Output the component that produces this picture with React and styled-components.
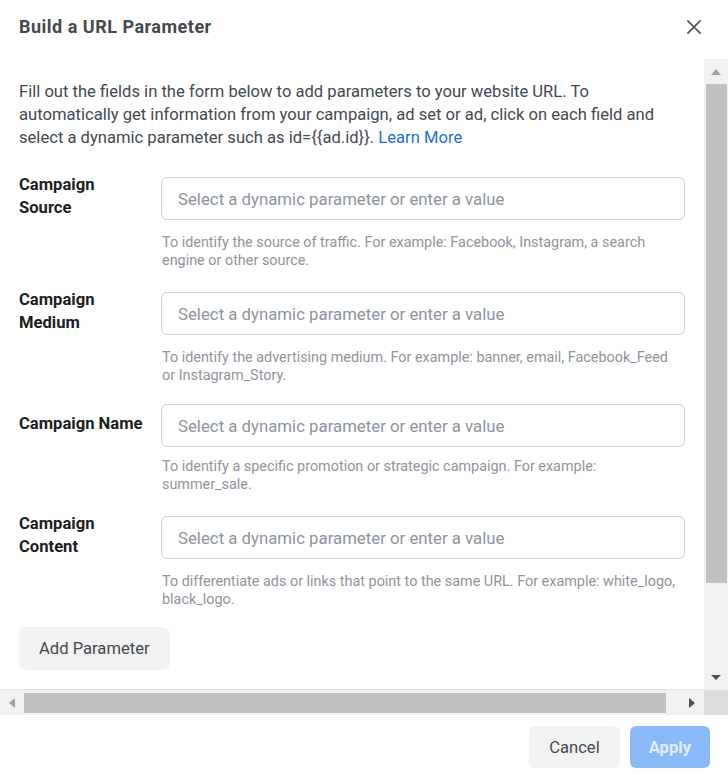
import React from "react";
import styled, { createGlobalStyle, css } from "styled-components";

const Global = createGlobalStyle`
  html, body { margin: 0; padding: 0; background: #ffffff; }
  body { font-family: Roboto, "Liberation Sans", Arial, sans-serif; }
  * { box-sizing: border-box; }
`;

const Dialog = styled.div`
  width: 728px;
  height: 775px;
  display: flex;
  flex-direction: column;
  background: #fff;
  overflow: hidden;
`;

const Header = styled.div`
  height: 59px;
  padding: 0 22px 5px 19px;
  display: flex;
  align-items: center;
  justify-content: space-between;
  flex-shrink: 0;
`;

const Title = styled.h2`
  margin: 0;
  font-size: 18px;
  letter-spacing: 0.5px;
  line-height: 22px;
  font-weight: 700;
  color: #444950;
`;

const CloseButton = styled.button`
  width: 24px;
  height: 24px;
  padding: 0;
  border: 0;
  background: transparent;
  display: flex;
  align-items: center;
  justify-content: center;
  color: #4b4f56;
  cursor: pointer;
`;

const ScrollArea = styled.div`
  display: grid;
  grid-template-columns: 1fr 24px;
  grid-template-rows: 631px 25px;
  flex-shrink: 0;
`;

const Viewport = styled.div`
  overflow: hidden;
  border-bottom: 1px solid #e3e3e3;
`;

const Content = styled.div`
  padding: 21px 19px 19px;
  display: flex;
  flex-direction: column;
  gap: 18px;
`;

const Intro = styled.p`
  margin: 0 0 6px;
  font-size: 16.6px;
  line-height: 23px;
  color: #444950;
`;

const Link = styled.a`
  color: #216fdb;
  text-decoration: none;
`;

const Field = styled.div`
  display: grid;
  grid-template-columns: 142px 1fr;
  grid-template-rows: minmax(45px, auto) auto;
  align-items: center;
`;

const Label = styled.label`
  grid-column: 1;
  max-width: 130px;
  padding-bottom: 5px;
  font-size: 16.6px;
  line-height: 23px;
  font-weight: 700;
  color: #1c1e21;
`;

const Input = styled.input`
  grid-column: 2;
  height: 43px;
  width: 100%;
  border: 1px solid #ccd0d5;
  border-radius: 6px;
  padding: 0 16px;
  font-family: inherit;
  font-size: 16.8px;
  color: #1c1e21;
  outline: none;
  &::placeholder { color: #8d949e; }
`;

const Helper = styled.div`
  grid-column: 2;
  margin-top: 10px;
  padding: 0 6px 0 1px;
  font-size: 14.4px;
  line-height: 18px;
  color: #90949c;
`;

const Button = styled.button`
  height: ${(p) => (p.$tall ? 43 : 42)}px;
  padding: 0 ${(p) => (p.$pad || 20)}px;
  border: 0;
  border-radius: ${(p) => (p.$tall ? 8 : 6)}px;
  font-family: inherit;
  font-size: 16.6px;
  cursor: pointer;
  ${(p) =>
    p.$primary
      ? css`
          background: #8ab9f8;
          color: #e2edfd;
          font-weight: 700;
        `
      : css`
          background: #f2f2f2;
          color: #444950;
          font-weight: 400;
        `}
`;

const AddButton = styled(Button)`
  align-self: flex-start;
`;

const VScroll = styled.div`
  background: #f1f1f1;
  display: flex;
  flex-direction: column;
`;

const HScroll = styled.div`
  background: #f1f1f1;
  display: flex;
  align-items: stretch;
`;

const Corner = styled.div`
  background: #dcdcdc;
`;

const ArrowBox = styled.div`
  flex: 0 0 ${(p) => (p.$horizontal ? 24 : 25)}px;
  display: flex;
  align-items: center;
  justify-content: center;
`;

const arrowColor = (p) => (p.$disabled ? "#a3a3a3" : "#505050");

const Triangle = styled.span`
  width: 0;
  height: 0;
  ${(p) =>
    p.$dir === "up" &&
    css`
      border-left: 5.5px solid transparent;
      border-right: 5.5px solid transparent;
      border-bottom: 6px solid ${arrowColor(p)};
    `}
  ${(p) =>
    p.$dir === "down" &&
    css`
      border-left: 5.5px solid transparent;
      border-right: 5.5px solid transparent;
      border-top: 5.5px solid ${arrowColor(p)};
    `}
  ${(p) =>
    p.$dir === "left" &&
    css`
      border-top: 5.5px solid transparent;
      border-bottom: 5.5px solid transparent;
      border-right: 6px solid ${arrowColor(p)};
    `}
  ${(p) =>
    p.$dir === "right" &&
    css`
      border-top: 5.5px solid transparent;
      border-bottom: 5.5px solid transparent;
      border-left: 6px solid ${arrowColor(p)};
    `}
`;

const VThumb = styled.div`
  height: 499px;
  margin: 0 1px 0 2px;
  background: #c1c1c1;
`;

const HThumb = styled.div`
  width: 642px;
  margin: 3px 0 2px;
  background: #c1c1c1;
`;

const Spacer = styled.div`
  flex: 1;
`;

const Footer = styled.div`
  flex: 1;
  display: flex;
  justify-content: flex-end;
  align-items: flex-start;
  gap: 10px;
  padding: 11px 18px 0;
`;

const fields = [
  {
    label: "Campaign Source",
    help: "To identify the source of traffic. For example: Facebook, Instagram, a search engine or other source.",
  },
  {
    label: "Campaign Medium",
    help: "To identify the advertising medium. For example: banner, email, Facebook_Feed or Instagram_Story.",
  },
  {
    label: "Campaign Name",
    help: "To identify a specific promotion or strategic campaign. For example: summer_sale.",
  },
  {
    label: "Campaign Content",
    help: "To differentiate ads or links that point to the same URL. For example: white_logo, black_logo.",
  },
];

export default function App() {
  return (
    <>
      <Global />
      <Dialog>
        <Header>
          <Title>Build a URL Parameter</Title>
          <CloseButton aria-label="Close">
            <svg width="24" height="24" viewBox="0 0 24 24" fill="none">
              <path d="M6 6 L18 18 M18 6 L6 18" stroke="currentColor" strokeWidth="1.7" strokeLinecap="square" />
            </svg>
          </CloseButton>
        </Header>
        <ScrollArea>
          <Viewport>
            <Content>
              <Intro>
                Fill out the fields in the form below to add parameters to your website URL. To
                automatically get information from your campaign, ad set or ad, click on each field and
                select a dynamic parameter such as id={"{{ad.id}}"}. <Link href="#">Learn More</Link>
              </Intro>
              {fields.map((f) => (
                <Field key={f.label}>
                  <Label>{f.label}</Label>
                  <Input placeholder="Select a dynamic parameter or enter a value" />
                  <Helper>{f.help}</Helper>
                </Field>
              ))}
              <AddButton $tall>Add Parameter</AddButton>
            </Content>
          </Viewport>
          <VScroll>
            <ArrowBox>
              <Triangle $dir="up" $disabled />
            </ArrowBox>
            <VThumb />
            <Spacer />
            <ArrowBox>
              <Triangle $dir="down" />
            </ArrowBox>
          </VScroll>
          <HScroll>
            <ArrowBox $horizontal>
              <Triangle $dir="left" $disabled />
            </ArrowBox>
            <HThumb />
            <Spacer />
            <ArrowBox $horizontal>
              <Triangle $dir="right" />
            </ArrowBox>
          </HScroll>
          <Corner />
        </ScrollArea>
        <Footer>
          <Button>Cancel</Button>
          <Button $primary $pad={19}>Apply</Button>
        </Footer>
      </Dialog>
    </>
  );
}
